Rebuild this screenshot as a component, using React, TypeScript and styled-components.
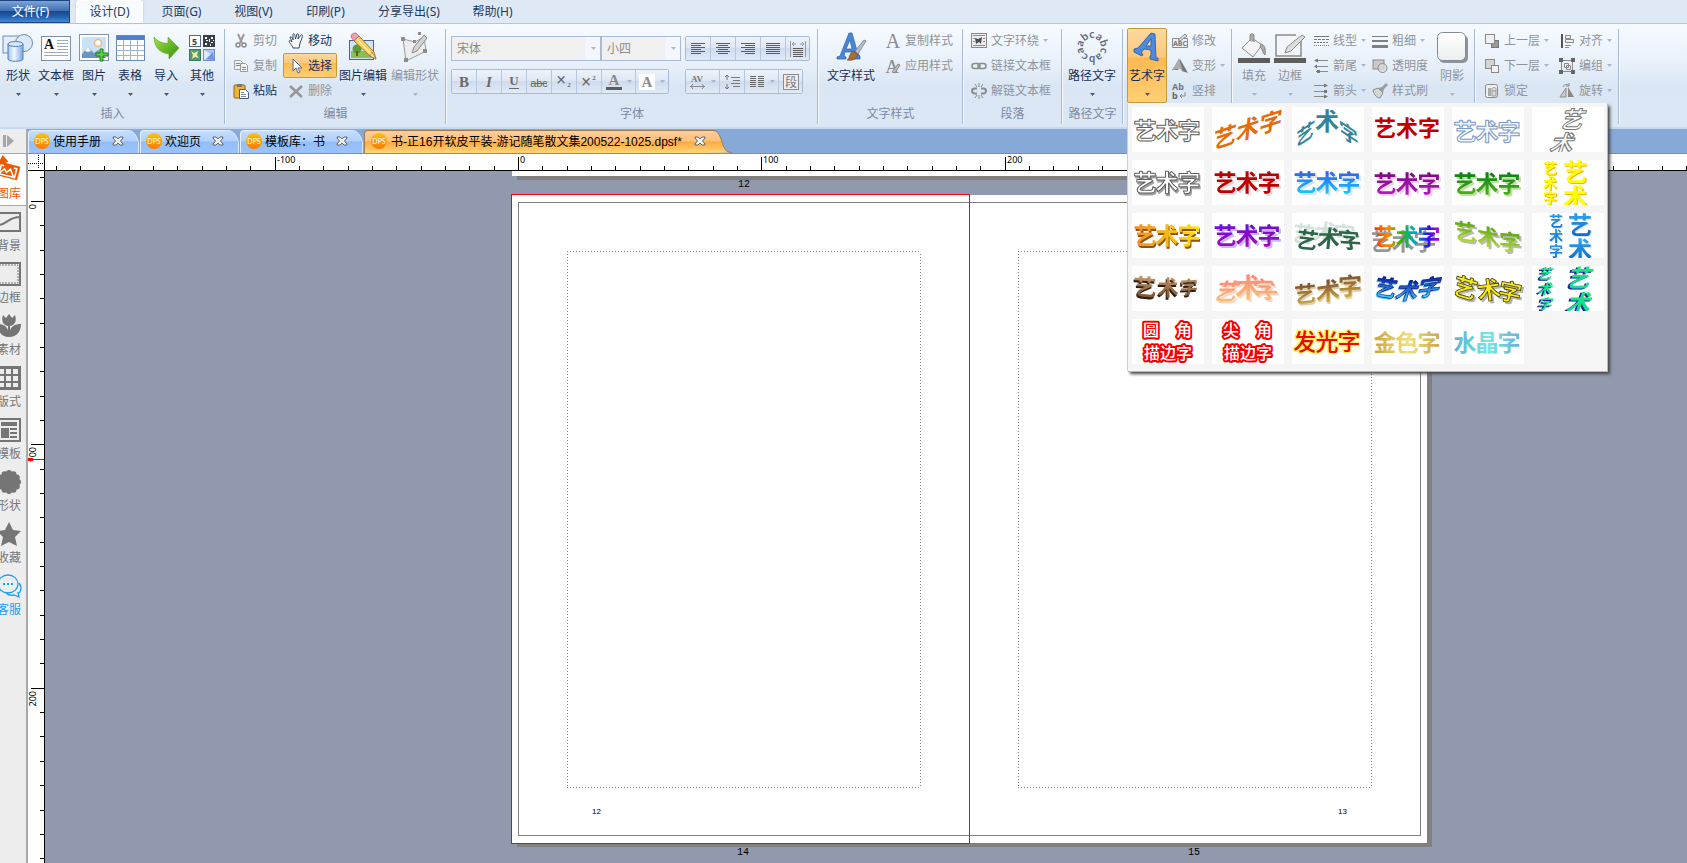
import React from 'react';
import styled, { createGlobalStyle, css } from 'styled-components';

const Global = createGlobalStyle`
  * { box-sizing: border-box; }
  html, body { margin: 0; }
  body, button, select {
    font-family: "Noto Sans", "Noto Sans CJK SC", sans-serif;
    font-size: 12px;
    line-height: 16px;
  }
  button { margin: 0; padding: 0; border: 0; background: none; color: inherit; white-space: nowrap; }
  svg { display: block; flex: none; }
`;

const Shell = styled.div`
  display: flex;
  flex-direction: column;
  height: 100vh;
  overflow: hidden;
  background: #dfe9f5;
`;

/* ---------- main menu ---------- */

const MenuBar = styled.nav`
  display: flex;
  flex: none;
  height: 23px;
  color: #1e395b;
`;

const FileButton = styled.button`
  width: 70px;
  padding-right: 8px;
  color: #fff;
  border: 1px solid #1c4584;
  border-left: 0;
  background: linear-gradient(#7fa3d6, #3f70b4 46%, #1b478e 50%, #1f5aa8 70%, #3f8bd2);
`;

const MenuTab = styled.button<{ $active?: boolean; $wide?: boolean }>`
  width: ${p => (p.$wide ? 90 : 67)}px;
  margin-left: ${p => (p.$active ? 6 : 0)}px;
  margin-right: 5px;
  ${p => p.$active && css`
    border: 1px solid #fff;
    border-bottom: 0;
    border-radius: 3px 3px 0 0;
    background: #f8fbff;
    box-shadow: 0 0 2px #a9bcd6;
    position: relative;
    z-index: 1;
  `}
`;

/* ---------- ribbon ---------- */

const RibbonBar = styled.header`
  display: flex;
  flex: none;
  height: 106px;
  border-top: 1px solid #b4c7e2;
  border-bottom: 2px solid #c4d8ef;
  background: linear-gradient(#f7fbff, #e6eff9 42%, #dae6f4 60%, #dce7f5);
`;

const GroupBox = styled.section<{ $w: number; $pad: number }>`
  position: relative;
  display: flex;
  flex: none;
  flex-direction: column;
  width: ${p => p.$w}px;
  padding: 4px 0 0 ${p => p.$pad}px;
  &::after {
    content: "";
    position: absolute;
    top: 5px;
    bottom: 3px;
    right: -1px;
    border-left: 1px solid #a5bad6;
    border-right: 1px solid #f4f9ff;
  }
`;

const GroupBody = styled.div`
  display: flex;
  height: 75px;
`;

const GroupLabel = styled.div<{ $pad: number }>`
  margin-left: -${p => p.$pad}px;
  padding-top: 3px;
  text-align: center;
  color: #7c8aa3;
`;

const Column = styled.div<{ $w?: number }>`
  display: flex;
  flex: none;
  flex-direction: column;
  align-items: flex-start;
  width: ${p => (p.$w ? p.$w + 'px' : 'auto')};
`;

const pressed = css`
  border-color: #c69a33;
  background: linear-gradient(#fbd9a0, #fdc87c 38%, #ffb951 40%, #ffcf75);
`;

const BigBox = styled.button<{ $w: number; $on?: boolean }>`
  display: flex;
  flex: none;
  flex-direction: column;
  align-items: center;
  width: ${p => p.$w}px;
  height: 75px;
  padding-top: 2px;
  border: 1px solid transparent;
  border-radius: 2px;
  color: #15305a;
  ${p => p.$on && pressed}
  &:disabled { color: #8f949c; }
`;

const BigText = styled.span`
  margin: 5px -8px 9px;
`;

const SmallBox = styled.button<{ $on?: boolean }>`
  display: flex;
  flex: none;
  align-items: center;
  gap: 4px;
  height: 25px;
  padding: 0 4px;
  border: 1px solid transparent;
  border-radius: 2px;
  color: #15305a;
  ${p => p.$on && pressed}
  &:disabled { color: #8f949c; }
`;

const Spacer = styled.div<{ $w: number }>`
  flex: none;
  width: ${p => p.$w}px;
`;

const Caret = ({ dim }: { dim?: boolean }) => (
  <svg width="5" height="3" viewBox="0 0 5 3"><path d="M0 0h5L2.5 3z" fill={dim ? '#a9b7cb' : '#44597a'} /></svg>
);

const gray = '#8b8b8b';

const bigIcons: Record<string, React.ReactNode> = {
  shapes: <><rect x="1" y="5" width="17" height="17" fill="#e3edf8" stroke="#6d8db5" /><circle cx="22" cy="12" r="8.500" fill="#dbe8f6" stroke="#6d8db5" /><path d="M6 13v15c0 3 15 3 15 0V13z" fill="url(#cyl)" stroke="#4f7fbe" /><ellipse cx="13.500" cy="13" rx="7.500" ry="2.500" fill="#d6e7fa" stroke="#4f7fbe" /></>,
  textbox: <><rect x="1.500" y="5.500" width="29" height="24" fill="#fff" stroke="#7e90a8" /><text x="4" y="18" fontSize="14" fontFamily="Liberation Serif" fontWeight="700" fill="#111">A</text><path d="M17 9.500h11M17 12.500h11M17 15.500h11M17 18.500h11M4 21.500h24M4 24.500h24" stroke="#9dabbf" /></>,
  picture: <><rect x="1.500" y="3.500" width="29" height="26" fill="#fff" stroke="#8795ab" /><rect x="4" y="6" width="24" height="21" fill="#c6e3fb" /><path d="M4 27v-4l6-7 6 6 4-3 8 8z" fill="#6f93bd" /><path d="M10 16l3 4-3 1-3-1z" fill="#fff" /><circle cx="20" cy="12" r="3.500" fill="#fff" stroke="#f0b67e" strokeWidth="1.500" /><path d="M22 18h3v4h5v3h-5v5h-3v-5h-4v-3h4z" fill="#5bcf3e" stroke="#23820f" /></>,
  table: <><rect x="2.500" y="4.500" width="28" height="25" fill="#fff" stroke="#6a88b8" /><rect x="3" y="5" width="27" height="4" fill="#4d80cf" /><path d="M3 14.500h27M3 19.500h27M3 24.500h27M9.500 9v20M16.500 9v20M23.500 9v20" stroke="#9fb4cf" /></>,
  import: <path d="M4 6c4 5 10 7 14 6V6l11 11-10 11v-5C9 22 4 15 4 6z" fill="url(#leaf)" stroke="#5aa31c" strokeWidth=".6" />,
  other: <><rect x="3.500" y="4.500" width="11" height="11" fill="#fff" stroke="#55677a" /><text x="6" y="13.500" fontSize="9" fontWeight="700" fill="#444">5</text><rect x="17" y="4" width="12" height="12" fill="#3b4047" /><path d="M19 6h2v2h-2zM25 6h2v2h-2zM19 12h2v2h-2zM23 8h1v3h-1zM25 11h2v1h-2zM24 13h1v2h-1zM20 9h2v1h-2zM27 9h1v1h-1z" fill="#fff" /><rect x="3.500" y="18.500" width="11" height="11" fill="#4d9a78" stroke="#3b7a5d" /><path d="M5 20l3 2 4-2-1 4 2 3-4-1-3 2 1-4z" fill="#f5e89a" /><rect x="17.500" y="18.500" width="11" height="11" fill="#a8c4f4" stroke="#6d8fd0" /><path d="M18 19l8 5-8 5z" fill="#dfeafd" /><path d="M28 29l-8-1 7-7z" fill="#7294e0" /></>,
  picedit: <><rect x="2.500" y="9.500" width="24" height="19" fill="#cfe4f7" stroke="#51657d" /><rect x="4" y="20" width="21" height="7" fill="#8dbd55" /><circle cx="10" cy="18" r="4.500" fill="#5c9b3a" /><path d="M9 20h2v5H9z" fill="#7a5230" /><path d="M7 10l5-5 15 16 2 7-6-3z" fill="#f9cc58" stroke="#b67a18" /><path d="M10 8l15 16" stroke="#fff0b0" strokeWidth="1.500" /><path d="M25 21l4 7-6-3z" fill="#f6e3c0" stroke="#8c6a30" strokeWidth=".6" /><path d="M4 6c0-3 2-4 5-4l3 3-5 5z" fill="#ee9fb0" stroke="#a65f70" strokeWidth=".7" /></>,
  shapeedit: <><path d="M4 8l12 3 9-5 2 14-20 10z" fill="#ededed" stroke="#9a9a9a" /><path d="M2 6h4v4H2zM14 9h3v3h-3zM5 27h4v4H5zM24 18h4v4h-4zM19 1h3v3h-3z" fill="#8c8c8c" /><path d="M13 22l2-6L25 4l3 3-10 13z" fill="#d2d2d2" stroke="#8c8c8c" /></>,
  textstyle: <><path d="M2 28v-2l3-1L14 2h3l6 21 2 2v3h-9v-2l2-1-1-4H10l-1 4 2 1v2zM11 18h6l-2-9z" fill="#4a86d8" stroke="#2b5fa8" strokeWidth=".7" /><path d="M20 20l9-11 2 1-8 13z" fill="#b5bcc5" stroke="#6d7682" strokeWidth=".7" /><path d="M12 29c3-1 2-8 7-9l4 4c-2 5-7 6-11 5z" fill="#a76d34" stroke="#714619" strokeWidth=".6" /></>,
  pathtext: <g fontFamily="Lato" fontSize="11" fontWeight="700" fill="#5b6d86" textAnchor="middle">{'abcabcabca'.split('').map((c, i) => <text key={i} x="16" y="7" transform={`rotate(${i * 36 - 72} 16 16)`}>{c}</text>)}</g>,
  wordart: <path d="M3 18l4-1L20 2l4 1 1 24h2v3l-8-2v-3l1-1v-5l-7-1-3 4 2 1-1 2-8-4zM15 15h5V8z" fill="#4b8ae0" stroke="#28569c" strokeWidth=".8" />,
  fill: <><path d="M4 17L14 7l10 7-9 12z" fill="#f3f3f3" stroke={gray} /><path d="M12 10V5c0-3 4-3 4 0v6M23 13c4 1 5 5 4 11-3-2-2-6-5-8z" fill="#aaa" stroke={gray} /><path d="M0 27h32v5H0z" fill="#5d5d5d" /></>,
  border: <><path d="M27 8v17H2V4h20" fill="#f2f6fb" stroke={gray} strokeWidth="1.500" /><path d="M11 22l2-6L28 4l3 2-14 14z" fill="#ddd" stroke={gray} /><path d="M0 27h32v5H0z" fill="#5d5d5d" /></>,
  shadow: <><rect x="3" y="4" width="29" height="28" rx="5" fill="#8e949c" /><rect x="1.500" y="1.500" width="28" height="28" rx="5" fill="url(#plate)" stroke="#858b94" /></>,
};

const lines = (d: string, w = 1) => <path d={d} stroke={gray} strokeWidth={w} fill="none" />;
const smallIcons: Record<string, React.ReactNode> = {
  cut: <><path d="M5 1l4 9M11 1L7 10" stroke="#9a9a9a" strokeWidth="2" /><circle cx="5" cy="12" r="2" fill="none" stroke={gray} strokeWidth="1.500" /><circle cx="11" cy="12" r="2" fill="none" stroke={gray} strokeWidth="1.500" /></>,
  copy: <><path d="M1.500 2.500h6l2 2v7h-8z" fill="#eee" stroke="#a5a5a5" /><path d="M7.500 5.500h5l2 2v6h-7z" fill="#f4f4f4" stroke="#999" />{lines('M3 5.500h4M3 7.500h4M9 9.500h4M9 11.500h4')}</>,
  paste: <><rect x="1" y="2" width="11" height="13" rx="1" fill="#edb43b" stroke="#8c651a" /><path d="M4 1h5v3H4z" fill="#777" /><path d="M6.500 6.500h6l3 3v6h-9z" fill="#fff" stroke="#3d6086" />{lines('M8 9.500h3M8 11.500h5M8 13.500h5')}</>,
  hand: <path d="M5 15c0-2-4-5-4-7 1-1 2 0 3 1L2 4c1-1 2 0 3 3L5 1c1-1 2 0 2.500 5L9 1c1-1 2 0 1 5l3-4c1-1 2 0 1 3l-2 5-1 5z" fill="#fff" stroke="#34496c" />,
  pointer: <path d="M5 1v12l3-3 2 5 2-1-2-4h4z" fill="#fff" stroke="#4e6a8e" />,
  del: <path d="M2 3l12 11M14 3L2 14" stroke="#969696" strokeWidth="2.500" fill="none" />,
  fontA: <text x="8" y="15" textAnchor="middle" fontSize="20" fontFamily="Liberation Serif" fill={gray}>A</text>,
  fontB: <><text x="7" y="15" textAnchor="middle" fontSize="19" fontFamily="Liberation Serif" fill={gray}>A</text><path d="M7 14l6-8 2 1-5 8z" fill="#bbb" stroke={gray} /></>,
  wrap: <><rect x=".5" y=".5" width="15" height="14" fill="#eee" stroke="#888" />{lines('M2 2.500h12M2 12.500h12M2 5.500h2M2 8.500h2M12 5.500h2M12 8.500h2')}<path d="M4 5l3 1 4-2-1 7-2-2-3 2z" fill="#4f4f4f" /></>,
  link: <><rect x="1" y="5.500" width="8" height="5" rx="2.500" fill="none" stroke={gray} strokeWidth="1.500" /><rect x="7" y="5.500" width="8" height="5" rx="2.500" fill="none" stroke={gray} strokeWidth="1.500" /></>,
  unlink: <><path d="M6 5.500H3.500a2.500 2.500 0 0 0 0 5H6M10 5.500h2.500a2.500 2.500 0 0 1 0 5H10" fill="none" stroke={gray} strokeWidth="2" />{lines('M8 0v4M8 12v4M4 1l2 3M12 1l-2 3M4 15l2-3M12 15l-2-3')}</>,
  modify: <><path d="M.5 5.500h15v9H.5z" fill="#eee" stroke={gray} /><text x="8" y="13" textAnchor="middle" fontSize="7" fontWeight="700" fill="#777">ABC</text><path d="M6 7l7-6 2 2-7 5z" fill="#ddd" stroke={gray} /></>,
  warp: <><path d="M8 1l8 14-6-2-2-4-2 3H0z" fill="#777" /><path d="M0 13L7 0l4 14-3-3H4z" fill="#ababab" /></>,
  vertical: <><text x="0" y="7" fontSize="9" fontWeight="700" fill="#777">Ab</text><text x="0" y="16" fontSize="9" fontWeight="700" fill="#666">b</text>{lines('M8 13h5V9M10 11l-2 2 2 2')}</>,
  dash: <g stroke="#777" fill="none"><path d="M1 3.500h15" /><path d="M1 6.500h15" strokeDasharray="3 1" /><path d="M1 9.500h15" strokeDasharray="2 1" /><path d="M1 12.500h15" strokeDasharray="1 1" /></g>,
  tail: <>{lines('M3 2.500h12M3 8.500h12M3 13.500h12')}<path d="M1 2.500l4-2v4zM1 8.500l3-2v4zM4 12h3v3H4z" fill="#777" /></>,
  head: <>{lines('M1 2.500h12M1 8.500h12M1 13.500h12')}<path d="M15 2.500l-4-2v4zM11 7h3v3h-3zM15 13.500l-4-2v4z" fill="#777" /></>,
  weight: <g fill="#808080"><path d="M0 3h16v1H0zM0 7h16v2H0zM0 12h16v3H0z" /></g>,
  opacity: <><rect x="1" y="2" width="11" height="9" fill="#c9c9c9" stroke={gray} /><circle cx="10.500" cy="10" r="4.500" fill="#ddd" fillOpacity=".7" stroke={gray} /></>,
  brush: <><path d="M1 7l5-2 5 5-3 5c-3 0-6-3-7-8z" fill="#d5d5d5" stroke={gray} /><path d="M6 5l5 5 1-4 4-4-2-2-4 4z" fill="#9c9c9c" /></>,
  front: <><rect x="7.500" y="7.500" width="7" height="7" fill="#999" stroke="#777" /><rect x="1.500" y="1.500" width="9" height="9" fill="#f0f0f0" stroke={gray} /></>,
  back: <><rect x="1.500" y="1.500" width="9" height="9" fill="#d4d4d4" stroke={gray} /><rect x="7.500" y="7.500" width="7" height="7" fill="#f2f2f2" stroke="#888" /></>,
  lock: <><rect x="1.500" y="1.500" width="12" height="13" rx="2" fill="#eee" stroke={gray} /><path d="M4 5h3v8H4z" fill="#aaa" /><path d="M8 8h4v5H8zM8 8V6c0-2 4-2 4 0v2" fill="#ddd" stroke="#999" /></>,
  align: <><path d="M2 1h2v14H2z" fill="#555" /><path d="M6.500 2.500h5v3h-5zM6.500 6.500h8v3h-8z" fill="#eee" stroke="#888" />{lines('M6 12.500h6M6 14.500h4')}</>,
  group: <>{lines('M2.500 2.500h11v11h-11z')}{lines('M5.500 5.500h4v4h-4zM7.500 7.500h4v4h-4z')}<path d="M0 0h4v4H0zM12 0h4v4h-4zM0 12h4v4H0zM12 12h4v4h-4z" fill="#666" /></>,
  rotate: <><path d="M1 14h6V5z" fill="#ccc" stroke={gray} /><path d="M9 14V4l6 10z" fill="#888" />{lines('M4 4c1-3 5-3 6-1M10 0v3H7')}</>,
};

const BigIcon = ({ name }: { name: string }) => (
  <svg width="32" height="32" viewBox="0 0 32 32" overflow="visible">{bigIcons[name]}</svg>
);

interface BigProps { icon: string; text: string; w?: number; off?: boolean; on?: boolean; arrow?: boolean }
const Big = ({ icon, text, w = 36, off, on, arrow = true }: BigProps) => (
  <BigBox $w={w} $on={on} disabled={off}>
    <BigIcon name={icon} />
    <BigText>{text}</BigText>
    {arrow && <Caret dim={off} />}
  </BigBox>
);

interface SmallProps { icon: string; text: string; off?: boolean; on?: boolean; arrow?: boolean }
const Small = ({ icon, text, off, on, arrow }: SmallProps) => (
  <SmallBox $on={on} disabled={off}>
    <svg width="16" height="16" viewBox="0 0 16 16" overflow="visible">{smallIcons[icon]}</svg>
    {text}
    {arrow && <Caret dim={off} />}
  </SmallBox>
);

interface GroupProps { w: number; pad?: number; label?: string; children: React.ReactNode }
const Group = ({ w, pad = 4, label, children }: GroupProps) => (
  <GroupBox $w={w} $pad={pad}>
    <GroupBody>{children}</GroupBody>
    {label && <GroupLabel $pad={pad}>{label}</GroupLabel>}
  </GroupBox>
);

/* ---------- font group ---------- */

const FontRows = styled.div`
  display: grid;
  grid-template-columns: 230px auto;
  grid-auto-rows: 25px;
  gap: 8px 4px;
  justify-items: start;
  padding-top: 8px;
`;

const Combos = styled.div`
  display: flex;
`;

const ComboBox = styled.label<{ $w: number }>`
  position: relative;
  width: ${p => p.$w}px;
  height: 25px;
  select {
    width: 100%;
    height: 100%;
    padding: 0 5px;
    appearance: none;
    border: 1px solid #a9bbd8;
    border-radius: 0;
    background: linear-gradient(90deg, #f0f0f0 calc(100% - 15px), #f3f7fd calc(100% - 15px));
    color: #8a8a8a;
    opacity: 1;
  }
  svg {
    position: absolute;
    top: 11px;
    right: 5px;
  }
`;

const ToolStrip = styled.div`
  display: flex;
  height: 25px;
  border: 1px solid #a9bbd8;
  border-radius: 2px;
`;

const Tool = styled.button<{ $wide?: boolean }>`
  display: flex;
  flex: none;
  align-items: center;
  justify-content: center;
  gap: 5px;
  width: ${p => (p.$wide ? 34 : 25)}px;
  background: linear-gradient(#edf3fb, #dde7f4 48%, #cfdcee 50%, #e0eaf7);
  color: #6b6b6b;
  & + & { border-left: 1px solid #b7c7de; }
  &:first-child, &:last-child { width: ${p => (p.$wide ? 33 : 24)}px; }
`;

const glyph = (t: string, x: number, y: number, s: number, extra: React.SVGProps<SVGTextElement> = {}) => (
  <text x={x} y={y} fontSize={s} textAnchor="middle" fontFamily="Liberation Serif" fontWeight="700" fill="#6a6a6a" {...extra}>{t}</text>
);
const bars = (rows: [number, number][]) => (
  <path d={rows.map(([a, b], i) => `M${a} ${2.5 + i * 2}H${b}`).join('')} stroke="#5c5c5c" fill="none" />
);
const toolIcons: Record<string, React.ReactNode> = {
  left: bars([[1, 15], [1, 11], [1, 15], [1, 11], [1, 15], [1, 11]]),
  center: bars([[1, 15], [3, 13], [1, 15], [3, 13], [1, 15], [3, 13]]),
  right: bars([[1, 15], [5, 15], [1, 15], [5, 15], [1, 15], [5, 15]]),
  justify: bars([[1, 15], [1, 15], [1, 15], [1, 15], [1, 15], [1, 15]]),
  distribute: <><path d="M.5 0v16M15.500 0v16M2 3h4M10 3h4M4 1L2 3l2 2M12 1l2 2-2 2" stroke="#9b9b9b" fill="none" /><path d="M3 7.500h10M3 9.500h10M3 11.500h10M3 13.500h10M3 15.500h10" stroke="#5c5c5c" /></>,
  bold: glyph('B', 8, 13, 15),
  italic: glyph('I', 8, 13, 15, { fontStyle: 'italic' }),
  underline: <>{glyph('U', 8, 11, 13)}<path d="M3 14.500h10" stroke="#6a6a6a" /></>,
  strike: <>{glyph('abc', 8, 13, 11, { fontFamily: 'Liberation Sans', fontWeight: 400 })}<path d="M0 9.500h16" stroke="#6a6a6a" /></>,
  sub: <>{glyph('×', 5, 12, 18)}{glyph('2', 13, 13, 7)}</>,
  sup: <>{glyph('×', 5, 14, 18)}{glyph('2', 13, 6, 7)}</>,
  color: <>{glyph('A', 8, 11, 15, { fill: '#8a8a8a' })}<path d="M0 13h16v3H0z" fill="#5d5d5d" /></>,
  back: <><path d="M0 0h16v16H0z" fill="#fff" />{glyph('A', 8, 13, 15, { fill: '#8a8a8a' })}</>,
  spacing: <>{glyph('AV', 7, 8, 9, { fill: '#777' })}<path d="M0 12.500h15M3 10l-2 2.500 2 2.500M12 10l2 2.500-2 2.500" stroke="#888" fill="none" /></>,
  leading: <path d="M3 1v5M3 10v5M1 3l2-2 2 2M1 13l2 2 2-2M7 3.500h9M9 6.500h7M7 9.500h9M9 12.500h7" stroke="#777" fill="none" />,
  columns: <path d="M1 2.500h6M1 4.500h6M1 6.500h6M1 8.500h6M1 10.500h6M1 12.500h6M9 2.500h6M9 4.500h6M9 6.500h6M9 8.500h6M9 10.500h6M9 12.500h6" stroke="#666" />,
  para: <><rect x=".5" y=".5" width="15" height="15" fill="#eee" stroke="#8c8c8c" /><text x="8" y="13" fontSize="12" textAnchor="middle" fill="#777">段</text></>,
};
const ToolSet = ({ items }: { items: string[] }) => (
  <ToolStrip>
    {items.map(item => {
      const [name, menu] = item.split('+');
      return (
        <Tool key={name} $wide={!!menu} aria-label={name}>
          <svg width="16" height="16" viewBox="0 0 16 16" overflow="visible">{toolIcons[name]}</svg>
          {menu && <Caret dim />}
        </Tool>
      );
    })}
  </ToolStrip>
);

/* ---------- word art gallery ---------- */

const Anchor = styled.div`
  position: relative;
`;

const Gallery = styled.div`
  position: absolute;
  z-index: 10;
  top: 100%;
  left: 0;
  display: grid;
  grid-template-columns: repeat(6, 72px);
  grid-auto-rows: 45px;
  gap: 8px;
  padding: 4px 3px 7px 4px;
  border-left: 1px solid #d0d0d0;
  background: #f5f5f5;
  box-shadow: 1px 1px 0 #b8b8b8, 3px 3px 3px #444;
`;

const Swatch = styled.button`
  background: #fff;
  overflow: hidden;
`;

type G = [string, number, number, number, string?];
interface Art {
  g: G[];
  fill: string | string[];
  across?: boolean;
  stroke?: string;
  sw?: number;
  shade?: string;
  off?: [number, number];
  weight?: number;
}

const flat = (y: number, s = 23, t = '艺术字', skew?: string): G[] =>
  [...t].map((c, i) => [c, 13 + i * 22, y, s, skew] as G);
const column = (x1: number, x2: number, skew?: string): G[] => [
  ['艺', x1, 8, 14, skew], ['术', x1, 23, 14, skew], ['字', x1, 38, 14, skew],
  ['艺', x2, 12, 24, skew], ['术', x2, 37, 24, skew],
];
const stacked = (first: string): G[] => [
  [first, 19, 11, 16], ['角', 52, 11, 16], ['描', 20, 34, 16], ['边', 36, 34, 16], ['字', 52, 34, 16],
];

const arts: Art[] = [
  { g: flat(23), fill: '#fff', stroke: '#5e5e5e', sw: 1 },
  { g: [['艺', 13, 30, 23, 'skewY(-18) skewX(-6)'], ['术', 36, 22, 23, 'skewY(-18) skewX(-6)'], ['字', 59, 15, 23, 'skewY(-18) skewX(-6)']], fill: '#e46c0a' },
  { g: [['艺', 13, 27, 19, 'skewY(-34) skewX(-8)'], ['术', 35, 14, 24], ['字', 57, 27, 19, 'skewY(34) skewX(8)']], fill: '#31859b' },
  { g: flat(21, 22), fill: '#c00000' },
  { g: flat(24), fill: '#f3f8ff', stroke: '#7898c5', sw: 1 },
  { g: [['艺', 41, 12, 23, 'skewX(-20)'], ['术', 31, 36, 23, 'skewX(-20)']], fill: '#fff', stroke: '#777', sw: 1 },

  { g: flat(22), fill: '#fff', stroke: '#5e5e5e', sw: 1, shade: '#a0a0a0', off: [1, 2] },
  { g: flat(22), fill: '#c00000', shade: '#dcdcdc', off: [2, 2] },
  { g: flat(22), fill: ['#2b60f2', '#18c3ff'], shade: '#dbe4ee', off: [2, 2] },
  { g: flat(23), fill: ['#7a0a7c', '#b616c4'], shade: '#eed4e4', off: [2, 2] },
  { g: flat(23), fill: ['#0a7f18', '#46ae18'], shade: '#c3dda6', off: [2, 2] },
  { g: column(18, 43), fill: '#ffff00', shade: '#f5b50a', off: [1, 1] },

  { g: flat(22), fill: ['#f08c28', '#ffe800'], across: true, shade: '#93510b', off: [1, 2] },
  { g: flat(22), fill: ['#6a10d8', '#a408b8'], shade: '#c3baf7', off: [2, 2] },
  { g: [['艺', 15, 27, 22, 'skewX(-12) skewY(6)'], ['术', 37, 25, 23, 'skewX(-6)'], ['字', 58, 27, 22, 'skewX(12) skewY(4)']], fill: '#2e6548', shade: '#cfe3db', off: [-4, -6] },
  { g: flat(23), fill: ['#ff2a00', '#ff8a00', '#2fb400', '#00a8d0', '#3010e8', '#e000d0'], across: true, shade: '#979797', off: [-4, 5] },
  { g: [['艺', 13, 19, 22, 'skewY(8)'], ['术', 36, 24, 22, 'skewY(12)'], ['字', 58, 29, 22, 'skewY(4)']], fill: ['#5ea516', '#b3dc34'], shade: '#b9b9b9', off: [2, 2] },
  { g: column(24, 48), fill: ['#2ba0ea', '#1269cf'], shade: '#d8e2ea', off: [1, 1] },

  { g: [['艺', 13, 21, 23, 'skewY(4)'], ['术', 36, 21, 21], ['字', 57, 21, 18, 'skewY(-3)']], fill: ['#c19468', '#7d5632'], shade: '#2c1c10', off: [-1, 2] },
  { g: [['艺', 15, 25, 23, 'skewX(-22)'], ['术', 36, 21, 26], ['字', 54, 23, 23, 'skewX(22)']], fill: ['#ff8a78', '#f8be78'], shade: '#f9d8c3', off: [2, 2] },
  { g: [['艺', 13, 28, 22, 'skewY(-6)'], ['术', 36, 25, 24, 'skewY(-8)'], ['字', 58, 20, 24, 'skewY(-4)']], fill: ['#7f5134', '#cba53d'], shade: '#e0cfa6', off: [1, 2] },
  { g: [['艺', 14, 22, 22, 'skewX(-14) skewY(8)'], ['术', 36, 25, 22, 'skewX(-18)'], ['字', 58, 21, 22, 'skewX(-14) skewY(-8)']], fill: ['#0b1da8', '#4cd0ff'], stroke: '#0a1a80', sw: 0.6, shade: '#51b9ee', off: [-1, 1] },
  { g: [['艺', 13, 22, 24, 'rotate(16)'], ['术', 37, 24, 24, 'rotate(-8)'], ['字', 58, 26, 23, 'rotate(12)']], fill: '#f7ea13', stroke: '#46400a', sw: 0.8, shade: '#b2b2b2', off: [2, 2] },
  { g: column(14, 48, 'skewX(-18)'), fill: ['#17e878', '#17d7a0'], shade: '#20229c', off: [-2, 1] },

  { g: stacked('圆'), fill: '#fff', stroke: '#f40000', sw: 4, weight: 500 },
  { g: stacked('尖'), fill: '#fff', stroke: '#f40000', sw: 4, weight: 500 },
  { g: flat(22), fill: '#e60a00', stroke: '#fff35c', sw: 3, weight: 500 },
  { g: flat(23, 23, '金色字'), fill: ['#cba43e', '#f1e07f', '#c9a142'], across: true },
  { g: flat(23, 23, '水晶字'), fill: ['#58b4d2', '#78e6e2', '#66aed2'], across: true },
];
arts[26].g = flat(22, 23, '发光字');

const ArtView = ({ art, id }: { art: Art; id: string }) => {
  const stops = Array.isArray(art.fill) ? art.fill : [];
  const line = art.across ? { x1: 2, x2: 70, y1: 0, y2: 0 } : { x1: 0, x2: 0, y1: -10, y2: 10 };
  return (
    <svg width="72" height="45" viewBox="0 0 72 45">
      {stops.length > 0 && (
        <linearGradient id={id} gradientUnits="userSpaceOnUse" {...line}>
          {stops.map((c, i) => <stop key={c + i} offset={i / (stops.length - 1)} stopColor={c} />)}
        </linearGradient>
      )}
      <g
        filter={art.shade && art.off ? `drop-shadow(${art.off[0]}px ${art.off[1]}px 0 ${art.shade})` : undefined}
        fontWeight={art.weight || 700}
        fontFamily='"Noto Sans CJK SC", sans-serif'
        textAnchor="middle"
        fill={stops.length ? `url(#${id})` : (art.fill as string)}
        stroke={art.stroke}
        strokeWidth={art.sw}
        strokeLinejoin="round"
        paintOrder={(art.sw || 0) > 1 ? 'stroke' : 'normal'}
      >
        {art.g.map(([c, x, y, s, t], i) => art.across
          ? <text key={i} x={x} y={y + s * 0.37} fontSize={s}>{c}</text>
          : <text key={i} y={s * 0.37} fontSize={s} transform={`translate(${x} ${y}) ${t || ''}`}>{c}</text>)}
      </g>
    </svg>
  );
};

/* ---------- document tabs and side bar ---------- */

const Body = styled.div`
  display: flex;
  flex: 1;
  min-height: 0;
`;

const SideBar = styled.aside`
  display: flex;
  flex: none;
  flex-direction: column;
  width: 28px;
  overflow: hidden;
  border-right: 2px solid #a9a9a9;
  background: #ededed;
`;

const Expand = styled.button`
  flex: none;
  height: 25px;
  padding-left: 3px;
  border-bottom: 1px solid #a9a9a9;
`;

const SideItem = styled.button<{ $active?: boolean; $color?: string }>`
  display: flex;
  flex: none;
  flex-direction: column;
  align-items: flex-end;
  gap: 6px;
  height: 52px;
  padding: 6px 5px 0 0;
  color: ${p => p.$color || '#757575'};
  ${p => p.$active && css`
    border-bottom: 1px solid #a9a9a9;
    background: #fff;
  `}
`;

const Main = styled.main`
  display: flex;
  flex: 1;
  flex-direction: column;
  min-width: 0;
`;

const TabStrip = styled.div`
  display: flex;
  flex: none;
  gap: 1px;
  height: 25px;
  border-bottom: 1px solid #7f8da6;
  background: #87a9d8;
`;

const DocTab = styled.div<{ $active?: boolean }>`
  position: relative;
  display: flex;
  align-items: center;
  height: 24px;
  padding-left: ${p => (p.$active ? 7 : 6)}px;
  font-family: "Liberation Sans", "Noto Sans CJK SC", sans-serif;
  color: #000;
  > * { position: relative; }
`;

const TabFill = styled.div<{ $active?: boolean; $cap: number }>`
  && { position: absolute; }
  inset: 1px ${p => p.$cap}px 0 0;
  border-top: 1px solid ${p => (p.$active ? '#9c7b4f' : '#e4f0ff')};
  border-left: 1px solid ${p => (p.$active ? '#9c7b4f' : '#e4f0ff')};
  border-top-left-radius: 4px;
  background: ${p => p.$active
    ? 'linear-gradient(#fdcf9f, #ffbf77 46%, #ffa93c 50%, #ffd77a)'
    : 'linear-gradient(#c5ddff, #b0d0fd 46%, #93bdf8 50%, #9cc4fb)'};
`;

const TabName = styled.button<{ $active?: boolean }>`
  margin: 2px ${p => (p.$active ? 12 : 11)}px 0 ${p => (p.$active ? 4 : 3)}px;
  font-family: inherit;
`;

const Badge = ({ id }: { id: string }) => (
  <svg width="16" height="16" viewBox="0 0 16 16">
    <linearGradient id={id} x1="0" x2="0" y1="0" y2="1"><stop offset="0" stopColor="#ffc20a" /><stop offset="1" stopColor="#f57a08" /></linearGradient>
    <circle cx="8" cy="8" r="8" fill={`url(#${id})`} />
    <text x="8" y="11" fontSize="7" fontFamily="Lato" textAnchor="middle" fill="#fff">DPS</text>
  </svg>
);

const Cross = () => (
  <svg width="12" height="12" viewBox="0 0 12 12">
    <path d="M1 2h3l2 2 2-2h3v1L8.500 6 11 9v1H8L6 8l-2 2H1V9l2.500-3L1 3z" fill="#f1f1f1" stroke="#5f6670" />
  </svg>
);

const Doc = ({ name, active, n }: { name: string; active?: boolean; n: number }) => {
  const cap = active ? 26 : 15;
  const top = active ? ['#fdcf9f', '#ffbf77', '#ffa93c', '#ffd77a'] : ['#c5ddff', '#b0d0fd', '#93bdf8', '#9cc4fb'];
  const edge = active ? 'M0 1.500h7c7 0 8 10 11 17q2 5 8 5' : 'M0 1.500h4c6 0 9 6 10.500 12V24';
  return (
    <DocTab $active={active}>
      <TabFill $active={active} $cap={cap} />
      <Badge id={`dps${n}`} />
      <TabName $active={active}>{name}</TabName>
      <button aria-label="关闭"><Cross /></button>
      <svg width={cap} height="24" viewBox={`0 0 ${cap} 24`}>
        <linearGradient id={`cap${n}`} x1="0" x2="0" y1="0" y2="1">
          <stop offset="0" stopColor={top[0]} /><stop offset=".46" stopColor={top[1]} />
          <stop offset=".5" stopColor={top[2]} /><stop offset="1" stopColor={top[3]} />
        </linearGradient>
        <path d={edge + 'L0 24z'} fill={`url(#cap${n})`} />
        <path d={edge} fill="none" stroke={active ? '#9c7b4f' : '#d7e7fc'} />
      </svg>
    </DocTab>
  );
};

const scallop = Array.from({ length: 12 }, (_, i) => {
  const a = (i * Math.PI) / 6;
  return <circle key={i} cx={12 + 9 * Math.cos(a)} cy={10 + 9 * Math.sin(a)} r="3" fill="currentColor" />;
});

const sideItems: { text: string; active?: boolean; color?: string; icon: React.ReactNode }[] = [
  { text: '图库', active: true, color: '#ee5a00', icon: <g transform="rotate(14 12 11)"><path d="M-4 4h26v14H-4z" fill="currentColor" /><path d="M3 16V7h3M16 7h3v9H3l4-6 3 3 3-4 5 7" fill="none" stroke="#fff" strokeWidth="1.500" /><path d="M0 4l2-7 7 5-3 3z" fill="currentColor" /></g> },
  { text: '背景', icon: <path d="M1 1h22v18H1zM1 13c9 0 10-8 22-8" fill="none" stroke="currentColor" strokeWidth="2" /> },
  { text: '边框', icon: <><path d="M0 -1h23v22H0z" fill="none" stroke="currentColor" strokeWidth="2" /><path d="M2 1h19v18H2z" fill="none" stroke="currentColor" strokeDasharray="2 1" /></> },
  { text: '素材', icon: <path d="M6 -1l3 3 3-4 3 4 3-3c2 6 0 10-5 11v4c2-4 5-6 11-6 0 7-4 13-12 13S1 15 1 8c5 0 8 2 10 6v-4C6 9 4 5 6-1z" fill="currentColor" /> },
  { text: '版式', icon: <path d="M0 -2h24v24H0zM2 1v5h5V1zM9 1v5h5V1zM16 1v5h5V1zM2 8v5h5V8zM9 8v5h5V8zM16 8v5h5V8zM2 15v4h5v-4zM9 15v4h5v-4zM16 15v4h5v-4z" fill="currentColor" fillRule="evenodd" /> },
  { text: '模板', icon: <path d="M0 -2h24v24H0zM2 0v20h20V0zM4 2h16v4H4zM4 8h8v10H4zM13 8h7v2h-7zM13 12h7v2h-7zM13 16h7v2h-7z" fill="currentColor" fillRule="evenodd" /> },
  { text: '形状', icon: <><circle cx="12" cy="10" r="10" fill="currentColor" />{scallop}</> },
  { text: '收藏', icon: <path d="M12-2l4 8 8 1-6 6 2 9-8-4-8 4 2-9-6-6 8-1z" fill="currentColor" /> },
  { text: '客服', color: '#18a0f0', icon: <g fill="none" stroke="currentColor" strokeWidth="1.300"><ellipse cx="11" cy="8" rx="10" ry="9" /><path d="M22 7c4 5 1 10-1 10l1 4-5-2c-4 1-6 0-8-2" /><path d="M6 8h2M10 8h2M14 8h2" strokeWidth="2" /></g> },
];

/* ---------- rulers and canvas ---------- */

const RulerRow = styled.div`
  display: flex;
  flex: none;
  height: 17px;
  background: #fff;
`;

const HRuler = styled.div`
  flex: 1;
  min-width: 0;
  overflow: hidden;
  border-bottom: 1px solid #000;
`;

const CanvasRow = styled.div`
  display: flex;
  flex: 1;
  min-height: 0;
`;

const VRuler = styled.div`
  flex: none;
  width: 17px;
  overflow: hidden;
  border-right: 1px solid #000;
  background: #fff;
`;

const Canvas = styled.div`
  position: relative;
  flex: 1;
  overflow: hidden;
  background: #9199af;
`;

const Spread = styled.div<{ $top: number }>`
  position: absolute;
  left: 467px;
  top: ${p => p.$top}px;
  width: 915px;
  height: 648px;
  background: #fff;
  box-shadow: 5px 4px 0 #808080;
`;

const Bleed = styled.div`
  position: absolute;
  inset: 7px 6px;
  border: 1px solid #808080;
`;

const dotsX = 'repeating-linear-gradient(90deg, #808080 0 1px, #fff 1px 3px)';
const dotsY = 'repeating-linear-gradient(#808080 0 1px, #fff 1px 3px)';
const Margins = styled.div<{ $x: number }>`
  position: absolute;
  left: ${p => p.$x}px;
  top: 56px;
  width: 354px;
  height: 537px;
  background:
    ${dotsX} top / 100% 1px no-repeat,
    ${dotsX} bottom / 100% 1px no-repeat,
    ${dotsY} left / 1px 100% no-repeat,
    ${dotsY} right / 1px 100% no-repeat;
`;

const CurrentPage = styled.div`
  position: absolute;
  left: -1px;
  top: -1px;
  width: 459px;
  height: 650px;
  border: 1px solid #f00;
`;

const Folio = styled.span<{ $x: number }>`
  position: absolute;
  left: ${p => p.$x}px;
  top: 609px;
  font: 8px/16px "Liberation Sans", sans-serif;
`;

const SheetNo = styled.span<{ $x: number; $y: number }>`
  position: absolute;
  left: ${p => p.$x}px;
  top: ${p => p.$y}px;
  width: 24px;
  text-align: center;
  font: 10px/16px "Liberation Mono", monospace;
`;

const STEP = 24.34;
const range = (a: number, b: number) => Array.from({ length: b - a + 1 }, (_, i) => a + i);
const digits = { fontFamily: 'Noto Sans', fontSize: 9, fill: '#000' };

const Across = () => (
  <svg width="2400" height="16" viewBox="0 0 2400 16">
    {range(-19, 60).map(i => {
      const x = Math.round(473 + i * STEP);
      return (
        <g key={i}>
          <path d={`M${x + 0.5} ${i % 10 ? 12 : 3}V16`} stroke="#000" />
          {i % 10 === 0 && <text x={x + 2} y="9" {...digits}>{i * 10}</text>}
        </g>
      );
    })}
  </svg>
);

const Down = () => (
  <svg width="16" height="1600" viewBox="0 0 16 1600">
    {range(-1, 55).map(i => {
      const y = Math.round(30 + i * STEP);
      return (
        <g key={i}>
          <path d={`M${i % 10 ? 12 : 3} ${y + 0.5}H16`} stroke="#000" />
          {i % 10 === 0 && <text textAnchor="end" transform={`translate(8 ${y + 3}) rotate(-90)`} {...digits}>{i * 10}</text>}
        </g>
      );
    })}
    <path d="M0 288.500h16" stroke="#f00" />
    <path d="M0 287h5v3H0z" fill="#f00" />
  </svg>
);

export default function App() {
  return (
    <Shell>
      <Global />
      <svg width="0" height="0" aria-hidden="true">
        <linearGradient id="cyl"><stop offset="0" stopColor="#9cc2ef" /><stop offset=".4" stopColor="#f2f8ff" /><stop offset="1" stopColor="#78a8e2" /></linearGradient>
        <linearGradient id="leaf" x1="0" y1="0" x2="1" y2="1"><stop offset="0" stopColor="#a5e23d" /><stop offset="1" stopColor="#2f8f14" /></linearGradient>
        <linearGradient id="plate" x1="0" y1="0" x2="0" y2="1"><stop offset="0" stopColor="#fff" /><stop offset="1" stopColor="#eceded" /></linearGradient>
      </svg>
      <MenuBar>
        <FileButton>文件(F)</FileButton>
        <MenuTab $active>设计(D)</MenuTab>
        <MenuTab>页面(G)</MenuTab>
        <MenuTab>视图(V)</MenuTab>
        <MenuTab>印刷(P)</MenuTab>
        <MenuTab $wide>分享导出(S)</MenuTab>
        <MenuTab>帮助(H)</MenuTab>
      </MenuBar>
      <RibbonBar>
        <Group w={225} pad={0} label="插入">
          <Big icon="shapes" text="形状" />
          <Big icon="textbox" text="文本框" w={40} />
          <Big icon="picture" text="图片" />
          <Big icon="table" text="表格" />
          <Big icon="import" text="导入" />
          <Big icon="other" text="其他" />
        </Group>
        <Group w={221} pad={3} label="编辑">
          <Column $w={55}>
            <Small icon="cut" text="剪切" off />
            <Small icon="copy" text="复制" off />
            <Small icon="paste" text="粘贴" />
          </Column>
          <Column>
            <Small icon="hand" text="移动" />
            <Small icon="pointer" text="选择" on />
            <Small icon="del" text="删除" off />
          </Column>
          <Big icon="picedit" text="图片编辑" w={52} />
          <Big icon="shapeedit" text="编辑形状" w={52} off />
        </Group>
        <Group w={372} pad={5} label="字体">
          <FontRows>
            <Combos>
              <ComboBox $w={150}><select disabled aria-label="字体"><option>宋体</option></select><Caret dim /></ComboBox>
              <ComboBox $w={80}><select disabled aria-label="字号"><option>小四</option></select><Caret dim /></ComboBox>
            </Combos>
            <ToolSet items={['left', 'center', 'right', 'justify', 'distribute']} />
            <ToolSet items={['bold', 'italic', 'underline', 'strike', 'sub', 'sup', 'color+menu', 'back+menu']} />
            <ToolSet items={['spacing+menu', 'leading', 'columns+menu', 'para']} />
          </FontRows>
        </Group>
        <Group w={145} pad={7} label="文字样式">
          <Big icon="textstyle" text="文字样式" w={52} arrow={false} />
          <Spacer $w={3} />
          <Column>
            <Small icon="fontA" text="复制样式" off />
            <Small icon="fontB" text="应用样式" off />
          </Column>
        </Group>
        <Group w={99} pad={3} label="段落">
          <Column>
            <Small icon="wrap" text="文字环绕" off arrow />
            <Small icon="link" text="链接文本框" off />
            <Small icon="unlink" text="解链文本框" off />
          </Column>
        </Group>
        <Group w={61} label="路径文字">
          <Big icon="pathtext" text="路径文字" w={52} />
        </Group>
        <Group w={109}>
          <Anchor>
            <Big icon="wordart" text="艺术字" w={40} on />
            <Gallery>
              {arts.map((art, i) => (
                <Swatch key={i}><ArtView art={art} id={`art${i}`} /></Swatch>
              ))}
            </Gallery>
          </Anchor>
          <Column>
            <Small icon="modify" text="修改" off />
            <Small icon="warp" text="变形" off arrow />
            <Small icon="vertical" text="竖排" off />
          </Column>
        </Group>
        <Group w={243}>
          <Big icon="fill" text="填充" off />
          <Big icon="border" text="边框" off />
          <Column $w={59}>
            <Small icon="dash" text="线型" off arrow />
            <Small icon="tail" text="箭尾" off arrow />
            <Small icon="head" text="箭头" off arrow />
          </Column>
          <Column $w={67}>
            <Small icon="weight" text="粗细" off arrow />
            <Small icon="opacity" text="透明度" off />
            <Small icon="brush" text="样式刷" off />
          </Column>
          <Big icon="shadow" text="阴影" off />
        </Group>
        <Group w={144}>
          <Column $w={75}>
            <Small icon="front" text="上一层" off arrow />
            <Small icon="back" text="下一层" off arrow />
            <Small icon="lock" text="锁定" off />
          </Column>
          <Column>
            <Small icon="align" text="对齐" off arrow />
            <Small icon="group" text="编组" off arrow />
            <Small icon="rotate" text="旋转" off arrow />
          </Column>
        </Group>
      </RibbonBar>
      <Body>
        <SideBar>
          <Expand aria-label="展开">
            <svg width="12" height="12" viewBox="0 0 12 12"><path d="M0 0h3v12H0zM4 0l7 6-7 6z" fill="#a6a6a6" /></svg>
          </Expand>
          {sideItems.map(s => (
            <SideItem key={s.text} $active={s.active} $color={s.color}>
              <svg width="24" height="20" viewBox="0 0 24 20" overflow="visible">{s.icon}</svg>
              {s.text}
            </SideItem>
          ))}
        </SideBar>
        <Main>
          <TabStrip>
            <Doc n={1} name="使用手册" />
            <Doc n={2} name="欢迎页" />
            <Doc n={3} name="模板库：书" />
            <Doc n={4} name="书-正16开软皮平装-游记随笔散文集200522-1025.dpsf*" active />
          </TabStrip>
          <RulerRow>
            <svg width="17" height="17" viewBox="0 0 17 17">
              <path d="M0 9.500h16M10.500 1v13" stroke="#000" strokeDasharray="1 1" />
              <path d="M0 16.500h17M16.500 0v17" stroke="#000" />
            </svg>
            <HRuler><Across /></HRuler>
          </RulerRow>
          <CanvasRow>
            <VRuler><Down /></VRuler>
            <Canvas>
              <Spread $top={-643} />
              <SheetNo $x={687} $y={6}>12</SheetNo>
              <SheetNo $x={1137} $y={6}>13</SheetNo>
              <Spread $top={24}>
                <Bleed />
                <Margins $x={55} />
                <Margins $x={506} />
                <CurrentPage />
                <Folio $x={80}>12</Folio>
                <Folio $x={826}>13</Folio>
              </Spread>
              <SheetNo $x={686} $y={674}>14</SheetNo>
              <SheetNo $x={1137} $y={674}>15</SheetNo>
            </Canvas>
          </CanvasRow>
        </Main>
      </Body>
    </Shell>
  );
}
